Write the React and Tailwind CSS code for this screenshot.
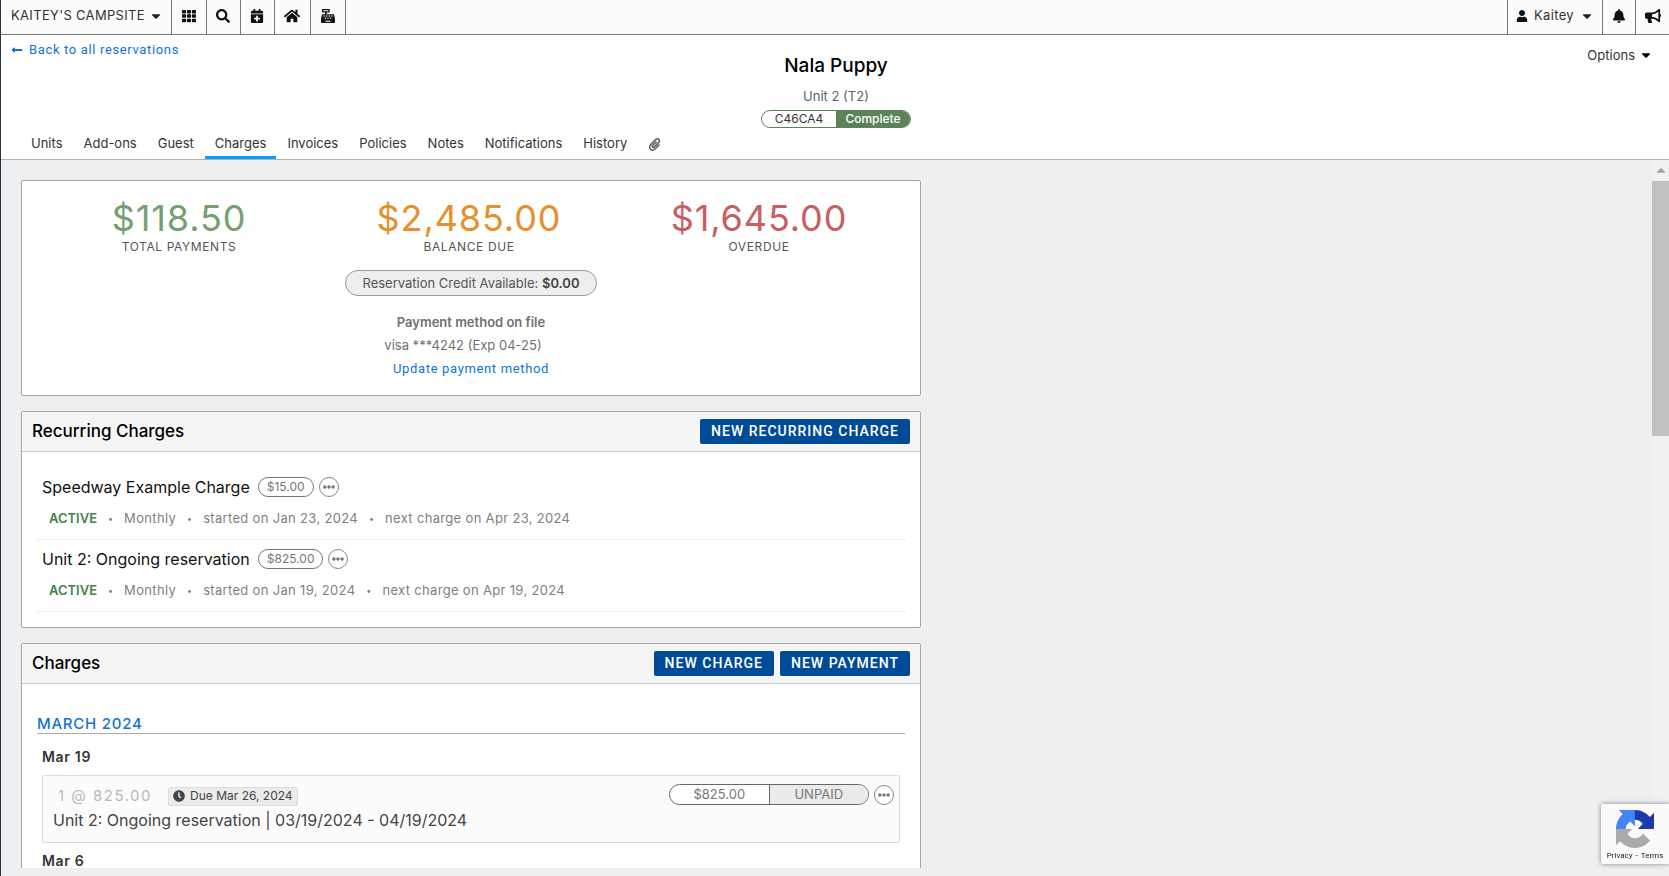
import React from "react";
import {
  FaBell,
  FaBullhorn,
  FaCalendarPlus,
  FaCaretDown,
  FaCashRegister,
  FaClock,
  FaEllipsisH,
  FaHome,
  FaLongArrowAltLeft,
  FaPaperclip,
  FaSearch,
  FaTh,
  FaUser,
} from "react-icons/fa";

const shortcuts = [
  { label: "Grid", icon: FaTh, width: "w-[35px]", size: "size-3.5" },
  { label: "Search", icon: FaSearch, width: "w-[34px]", size: "size-3.5" },
  { label: "New reservation", icon: FaCalendarPlus, width: "w-[34px]", size: "size-3.5" },
  { label: "Home", icon: FaHome, width: "w-9", size: "size-4" },
  { label: "Point of sale", icon: FaCashRegister, width: "w-[35px]", size: "size-3.5" },
];

const tabs = [
  "Units",
  "Add-ons",
  "Guest",
  "Charges",
  "Invoices",
  "Policies",
  "Notes",
  "Notifications",
  "History",
];

const totals = [
  { amount: "$118.50", label: "Total Payments", color: "text-[#74a071]" },
  { amount: "$2,485.00", label: "Balance Due", color: "text-[#e7902b]" },
  { amount: "$1,645.00", label: "Overdue", color: "text-[#c75f61]" },
];

const recurring = [
  {
    name: "Speedway Example Charge",
    amount: "$15.00",
    started: "started on Jan 23, 2024",
    next: "next charge on Apr 23, 2024",
  },
  {
    name: "Unit 2: Ongoing reservation",
    amount: "$825.00",
    started: "started on Jan 19, 2024",
    next: "next charge on Apr 19, 2024",
  },
];

function TopBar() {
  return (
    <nav className="flex h-[35px] shrink-0 border-b border-[#777] bg-[#fcfcfc] text-[#333]">
      <button className="flex items-center gap-1 border-r border-[#777] pb-[3px] pl-2.5 pr-2 text-[13px] uppercase tracking-wide">
        Kaitey's Campsite
        <FaCaretDown className="size-3.5 text-[#222]" />
      </button>
      {shortcuts.map(({ label, icon: Icon, width, size }) => (
        <button
          key={label}
          aria-label={label}
          className={`flex items-center justify-center border-r border-[#777] pb-[3px] text-[#111] ${width}`}
        >
          <Icon className={size} />
        </button>
      ))}
      <button className="ml-auto flex w-[95px] items-center justify-center gap-1.5 border-l border-[#777] pb-[3px] text-[13px] tracking-wide">
        <FaUser className="size-3 text-[#111]" />
        Kaitey
        <FaCaretDown className="size-3.5 text-[#222]" />
      </button>
      <button
        aria-label="Alerts"
        className="flex w-[33px] items-center justify-center border-l border-[#777] pb-[3px] text-[#111]"
      >
        <FaBell className="size-3.5" />
      </button>
      <button
        aria-label="Announcements"
        className="flex w-[34px] items-center justify-center border-l border-[#777] pb-[3px] text-[#111]"
      >
        <FaBullhorn className="size-4" />
      </button>
    </nav>
  );
}

function ReservationHeader() {
  return (
    <header className="shrink-0 border-b border-[#b0b1b3] bg-white">
      <div className="grid h-[94px] grid-cols-3 items-start">
        <a
          href="#reservations"
          className="flex items-center gap-1.5 pl-2.5 pt-[7px] font-[Roboto,sans-serif] text-[13px] leading-4 tracking-wider text-[#1572d3]"
        >
          <FaLongArrowAltLeft className="size-3" />
          Back to all reservations
        </a>
        <div className="flex flex-col items-center pl-0.5 pt-[19px]">
          <h1 className="text-[19px] font-medium leading-6 text-black">Nala Puppy</h1>
          <p className="mt-2 text-[13px] leading-5 text-[#566573]">Unit 2 (T2)</p>
          <div className="mt-1 flex h-[18px] w-[150px] overflow-hidden rounded-full border border-[#5c8257] text-xs leading-4">
            <span className="flex-1 text-center text-[#333]">C46CA4</span>
            <span className="flex-1 bg-[#5c8257] text-center font-medium text-white">Complete</span>
          </div>
        </div>
        <button className="mr-4 mt-3 flex items-center gap-1 justify-self-end text-[13px] leading-4 text-[#333]">
          Options
          <FaCaretDown className="size-3.5 text-black" />
        </button>
      </div>
      <div className="flex h-[30px] gap-px pl-5">
        {tabs.map((tab) => (
          <button
            key={tab}
            className={`border-b-[3px] px-2.5 pt-[3px] text-[13px] text-[#333] ${
              tab === "Charges" ? "border-[#0aa0fa]" : "border-transparent"
            }`}
          >
            {tab}
          </button>
        ))}
        <button aria-label="Attachments" className="px-2.5 text-[#666]">
          <FaPaperclip className="size-[13px]" />
        </button>
      </div>
    </header>
  );
}

function MoreButton() {
  return (
    <button
      aria-label="More"
      className="flex size-5 items-center justify-center rounded-full border border-[#888] bg-white text-[#777]"
    >
      <FaEllipsisH className="size-3" />
    </button>
  );
}

function ActionButton({ children }) {
  return (
    <button className="h-[25px] rounded-xs bg-[#004b97] px-[11px] pb-0.5 font-[Roboto,sans-serif] text-sm font-medium uppercase leading-5 tracking-[1px] text-white">
      {children}
    </button>
  );
}

function Panel({ title, actions, children }) {
  return (
    <section className="rounded-xs border border-[#a5a6a8] bg-white">
      <div className="flex h-10 items-center justify-between border-b border-[#ccc] bg-[#f5f5f5] px-2.5">
        <h2 className="text-[17px] font-medium text-black">{title}</h2>
        <div className="flex gap-1.5">
          {actions.map((action) => (
            <ActionButton key={action}>{action}</ActionButton>
          ))}
        </div>
      </div>
      {children}
    </section>
  );
}

function Summary() {
  return (
    <section className="rounded-xs border border-[#a5a6a8] bg-white px-3 pb-[15px] pt-4">
      <div className="grid grid-cols-3 pr-1 text-center">
        {totals.map((total) => (
          <div key={total.label}>
            <div className={`text-4xl leading-[42px] tracking-wide ${total.color}`}>
              {total.amount}
            </div>
            <div className="text-xs uppercase leading-4 tracking-wider text-[#555]">
              {total.label}
            </div>
          </div>
        ))}
      </div>
      <div className="mt-[15px] flex flex-col items-center text-[13px] text-[#707070]">
        <div className="rounded-full border border-[#999] bg-[#eee] px-4 py-0.5 leading-5 text-[#555]">
          Reservation Credit Available: <b className="font-semibold text-[#444]">$0.00</b>
        </div>
        <h3 className="mt-[15px] font-semibold leading-[23px]">Payment method on file</h3>
        <p className="pr-4 leading-[23px]">visa ***4242 (Exp 04-25)</p>
        <a
          href="#payment-method"
          className="font-[Roboto,sans-serif] leading-[23px] tracking-wider text-[#0b76dc]"
        >
          Update payment method
        </a>
      </div>
    </section>
  );
}

function RecurringRow({ item }) {
  return (
    <li className="border-b border-dotted border-[#ddd] px-[5px] pb-2.5 pt-[9px]">
      <div className="flex h-5 items-center">
        <span className="text-base leading-5 text-[#111]">{item.name}</span>
        <span className="ml-2 mr-[5px] h-5 rounded-full border border-[#777] px-2 text-xs leading-[18px] text-[#777]">
          {item.amount}
        </span>
        <MoreButton />
      </div>
      <div className="mt-3 flex h-5 items-center gap-[11px] pl-[7px] text-[13px] text-[#808080]">
        <b className="font-semibold text-[#468148]">ACTIVE</b>
        <span className="text-[9px]">•</span>
        <span className="tracking-wide">Monthly</span>
        <span className="text-[9px]">•</span>
        <span className="tracking-wide">{item.started}</span>
        <span className="text-[9px]">•</span>
        <span className="tracking-wide">{item.next}</span>
      </div>
    </li>
  );
}

function ChargeCard() {
  return (
    <div className="flex h-[68px] items-start justify-between rounded-xs border border-[#ddd] bg-[#fcfcfc] pl-2.5 pr-[5px] pt-2">
      <div>
        <div className="flex h-6 items-center pl-[5px]">
          <span className="text-[15px] tracking-widest text-[#b8b8b8]">1 @ 825.00</span>
          <span className="ml-4 flex h-[19px] items-center gap-[5px] rounded-xs border border-[#ddd] bg-[#ebebeb] px-1 text-xs text-[#444]">
            <FaClock className="size-3" />
            Due Mar 26, 2024
          </span>
        </div>
        <div className="text-base leading-6 text-[#444]">
          Unit 2: Ongoing reservation | 03/19/2024 - 04/19/2024
        </div>
      </div>
      <div className="flex items-center gap-[5px]">
        <div className="flex h-[21px] w-[200px] overflow-hidden rounded-full border border-[#666] bg-white text-center text-[13px] leading-[19px] text-[#777]">
          <span className="flex-1 border-r border-[#666]">$825.00</span>
          <span className="flex-1 bg-[#ebebeb]">UNPAID</span>
        </div>
        <MoreButton />
      </div>
    </div>
  );
}

function RecaptchaBadge() {
  return (
    <div className="fixed bottom-3 right-0 flex h-[60px] w-[68px] flex-col items-center rounded-l-xs bg-[#fafafa] pt-1.5 shadow-[0_0_5px_#808080]">
      <svg viewBox="0 0 64 64" className="size-[38px]" aria-hidden="true">
        <path
          d="M64 31.955l-.033-1.37V4.687l-7.16 7.16C50.948 4.674 42.033.093 32.05.093c-10.4 0-19.622 4.96-25.458 12.64l11.736 11.86a15.55 15.55 0 0 1 4.754-5.334c2.05-1.6 4.952-2.906 8.968-2.906.485 0 .86.057 1.135.163 4.976.393 9.288 3.14 11.828 7.124l-8.307 8.307L64 31.953"
          fill="#1c3aa9"
        />
        <path
          d="M31.862.094l-1.37.033H4.594l7.16 7.16C4.58 13.147 0 22.06 0 32.046c0 10.4 4.96 19.622 12.64 25.458L24.5 45.768a15.55 15.55 0 0 1-5.334-4.754c-1.6-2.05-2.906-4.952-2.906-8.968 0-.485.057-.86.163-1.135.393-4.976 3.14-9.288 7.124-11.828l8.307 8.307L31.86.095"
          fill="#4285f4"
        />
        <path
          d="M.001 32.045l.033 1.37v25.898l7.16-7.16c5.86 7.173 14.774 11.754 24.76 11.754 10.4 0 19.622-4.96 25.458-12.64l-11.736-11.86a15.55 15.55 0 0 1-4.754 5.334c-2.05 1.6-4.952 2.906-8.968 2.906-.485 0-.86-.057-1.135-.163-4.976-.393-9.288-3.14-11.828-7.124l8.307-8.307c-10.522.04-22.4.066-27.295-.005"
          fill="#ababab"
        />
      </svg>
      <div className="flex gap-[3px] whitespace-nowrap font-[Roboto,sans-serif] text-[8px] leading-[15px] text-[#222]">
        <a href="#privacy">Privacy</a>
        <span>-</span>
        <a href="#terms">Terms</a>
      </div>
    </div>
  );
}

function App() {
  return (
    <div className="flex h-screen flex-col border-l border-[#2b3245] bg-[#edeff1] font-[Inter,sans-serif]">
      <TopBar />
      <ReservationHeader />
      <div className="mb-2 flex min-h-0 flex-1">
        <main className="min-w-0 flex-1 overflow-hidden px-5 pt-5">
          <div className="flex max-w-[900px] flex-col gap-[15px]">
            <Summary />
            <Panel title="Recurring Charges" actions={["New Recurring Charge"]}>
              <ul className="px-[15px] pb-[15px] pt-4">
                {recurring.map((item) => (
                  <RecurringRow key={item.name} item={item} />
                ))}
              </ul>
            </Panel>
            <Panel title="Charges" actions={["New Charge", "New Payment"]}>
              <div className="px-[15px] pb-4 pt-[31px]">
                <h3 className="border-b border-[#aaa] text-[15px] font-medium leading-[18px] tracking-wider text-[#1572d3]">
                  MARCH 2024
                </h3>
                <div className="px-[5px]">
                  <h4 className="pb-[9px] pt-3.5 text-sm font-semibold leading-[18px] tracking-wider text-[#333]">
                    Mar 19
                  </h4>
                  <ChargeCard />
                  <h4 className="py-[9px] text-sm font-semibold leading-[18px] tracking-wider text-[#333]">
                    Mar 6
                  </h4>
                </div>
              </div>
            </Panel>
          </div>
        </main>
        <div className="flex w-[17px] flex-col items-center bg-[#f1f1f1]" aria-hidden="true">
          <FaCaretDown className="mb-[3px] mt-1 size-3.5 rotate-180 text-[#a3a3a3]" />
          <div className="h-[36%] w-full bg-[#c1c1c1]" />
        </div>
      </div>
      <RecaptchaBadge />
    </div>
  );
}

export default App;
